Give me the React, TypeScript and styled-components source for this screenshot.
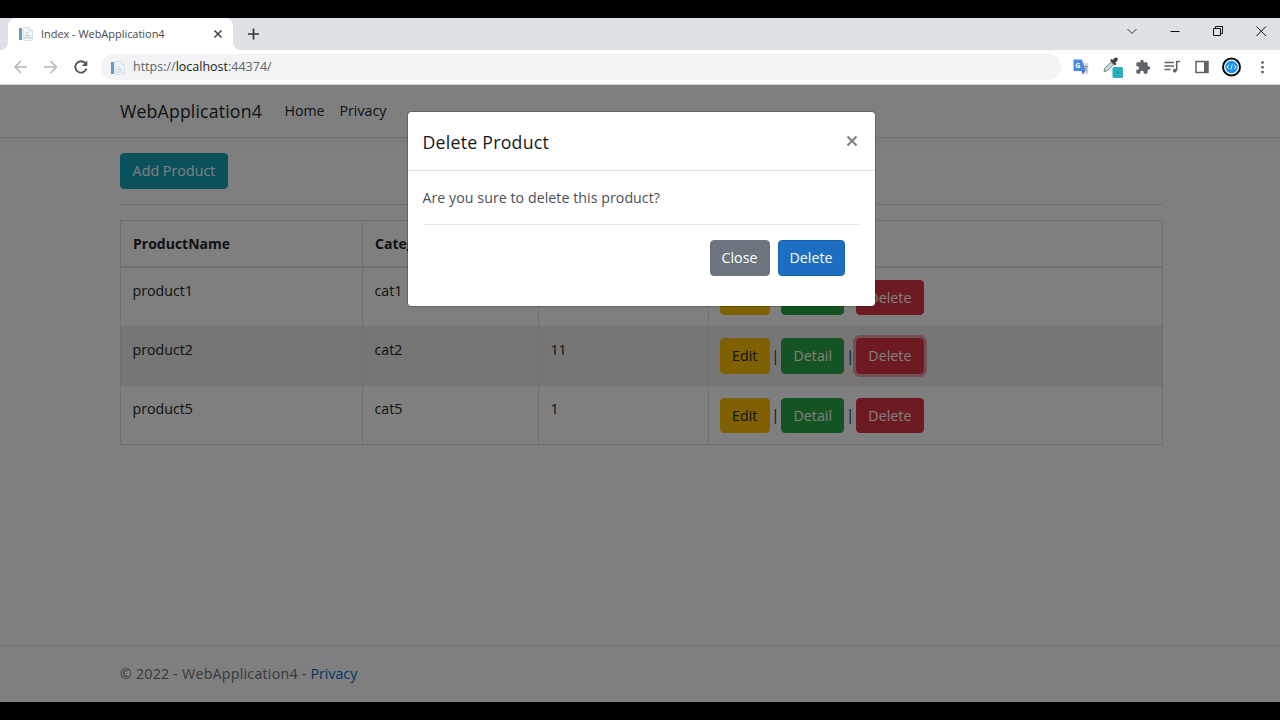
import React from 'react';
import styled, { createGlobalStyle } from 'styled-components';

const Global = createGlobalStyle`
  *, *::before, *::after { box-sizing: border-box; }
  html, body { margin: 0; padding: 0; background: #000; overflow: hidden; }
  body { font-family: "Open Sans", "Noto Sans", sans-serif; font-size: 14.2px; line-height: 22.5px; color: #212529; }
  button { font-family: inherit; }
`;

const Screen = styled.div`
  width: 1280px;
  height: 720px;
  padding: 18px 0;
  background: #000;
  display: flex;
  flex-direction: column;
`;

const TabStrip = styled.div`
  height: 32px;
  flex: none;
  display: flex;
  background: #dee1e6;
  padding-left: 8px;
`;

const Tab = styled.div`
  position: relative;
  width: 225px;
  height: 32px;
  background: #fff;
  border-radius: 8px 8px 0 0;
  display: flex;
  align-items: center;
  padding: 0 10px 0 10px;
  font-size: 11px;
  color: #45494d;

  &::before, &::after {
    content: "";
    position: absolute;
    bottom: 0;
    width: 7px;
    height: 7px;
  }
  &::before { left: -7px; background: radial-gradient(circle at 0 0, transparent 6.5px, #fff 7px); }
  &::after { right: -7px; background: radial-gradient(circle at 100% 0, transparent 6.5px, #fff 7px); }
`;

const TabTitle = styled.span`
  flex: 1;
  margin-left: 7px;
  letter-spacing: -0.04px;
  white-space: nowrap;
`;

const NewTab = styled.div`
  width: 14px;
  margin-left: 13px;
  display: flex;
  align-items: center;
`;

const WindowControls = styled.div`
  margin-left: auto;
  display: flex;
  align-items: center;
  gap: 31px;
  padding: 0 13px 6px 0;
`;

const Toolbar = styled.div`
  height: 35px;
  flex: none;
  display: flex;
  align-items: center;
  background: #fff;
  border-bottom: 1px solid #d9dbde;
  padding: 0 10px 0 13px;
`;

const NavIcons = styled.div`
  display: flex;
  gap: 14px;
  margin-right: 12px;
`;

const AddressBar = styled.div`
  width: 960px;
  height: 26px;
  border-radius: 13px;
  background: #f1f3f4;
  display: flex;
  align-items: center;
  padding: 1px 0 0 9px;
  font-size: 12.5px;
  color: #5f6368;
  gap: 7px;
`;

const Host = styled.span`
  color: #202124;
`;

const Extensions = styled.div`
  display: flex;
  align-items: center;
  flex: 1;
  justify-content: space-between;
  margin-left: 12px;
`;

const Page = styled.div`
  position: relative;
  flex: 1;
  background: #fff;
  display: flex;
  flex-direction: column;
`;

const Navbar = styled.nav`
  height: 53px;
  flex: none;
  display: flex;
  align-items: center;
  padding: 1px 120px 0;
  border-bottom: 1px solid #dee2e6;
  box-shadow: 0 4px 11px rgba(0, 0, 0, 0.05);
`;

const Brand = styled.span`
  font-size: 17.7px;
  letter-spacing: 0.16px;
  margin-right: 22.5px;
`;

const NavLink = styled.span`
  margin-right: 15px;
`;

const Content = styled.main`
  padding: 15px 117px 0 120px;
  flex: 1;
`;

type Tone = 'info' | 'warning' | 'success' | 'danger' | 'secondary' | 'primary';

const tones: Record<Tone, { fill: string; edge: string; text: string }> = {
  info: { fill: '#17a2b8', edge: '#17a2b8', text: '#fff' },
  warning: { fill: '#ffc107', edge: '#ffc107', text: '#212529' },
  success: { fill: '#28a745', edge: '#28a745', text: '#fff' },
  danger: { fill: '#dc3545', edge: '#dc3545', text: '#fff' },
  secondary: { fill: '#6c757d', edge: '#6c757d', text: '#fff' },
  primary: { fill: '#1b6ec2', edge: '#1861ac', text: '#fff' },
};

const Button = styled.button<{ $tone: Tone; $width: number; $focused?: boolean }>`
  width: ${p => p.$width}px;
  height: 35.6px;
  padding: 1px 0 0;
  border-radius: 4px;
  border: 1px solid ${p => tones[p.$tone].edge};
  background: ${p => tones[p.$tone].fill};
  color: ${p => tones[p.$tone].text};
  font-size: 14.2px;
  line-height: 22.5px;
  letter-spacing: 0.06px;
  box-shadow: ${p => (p.$focused ? '0 0 0 3px rgba(225, 83, 97, 0.5)' : 'none')};
`;

const Rule = styled.hr`
  margin: 15px 0;
  border: 0;
  border-top: 1px solid rgba(0, 0, 0, 0.1);
`;

const Table = styled.table`
  width: 1043px;
  table-layout: fixed;
  border-collapse: collapse;
  border: 1px solid #dee2e6;
`;

const HeadCell = styled.th`
  height: 47px;
  padding: 2px 12px 0;
  text-align: left;
  font-weight: 700;
  font-size: 14px;
  border: 1px solid #dee2e6;
  border-bottom-width: 2px;
`;

const Row = styled.tr<{ $hovered?: boolean }>`
  height: 59.3px;
  background: ${p => (p.$hovered ? '#ececec' : 'transparent')};
`;

const Cell = styled.td`
  padding: 12px 11.5px 10px;
  vertical-align: top;
  border: 1px solid #dee2e6;
`;

const Actions = styled.div`
  display: flex;
  align-items: center;
  margin: -0.6px 0 0 -0.8px;
`;

const Divider = styled.span`
  width: 11.6px;
  text-align: center;
`;

const Footer = styled.footer`
  height: 57px;
  flex: none;
  border-top: 1px solid #dee2e6;
  padding: 1px 120px 0;
  display: flex;
  align-items: center;
  color: #6c757d;
  white-space: pre;
  letter-spacing: 0.25px;
`;

const FooterLink = styled.a`
  color: #0366d6;
  letter-spacing: 0;
`;

const Backdrop = styled.div`
  position: absolute;
  inset: 0;
  background: rgba(0, 0, 0, 0.5);
  display: flex;
  justify-content: center;
  align-items: flex-start;
  padding-top: 26px;
`;

const Dialog = styled.section`
  width: 469px;
  height: 195.5px;
  margin-left: 2px;
  background: #fff;
  border: 1px solid rgba(0, 0, 0, 0.2);
  background-clip: padding-box;
  border-radius: 4.5px;
`;

const DialogHeader = styled.header`
  height: 59px;
  border-bottom: 1px solid #dee2e6;
  padding: 0 15px;
  display: flex;
  align-items: center;
  justify-content: space-between;
`;

const DialogTitle = styled.h5`
  margin: 2px 0 0;
  font-size: 17.7px;
  font-weight: 500;
  letter-spacing: 0.26px;
  color: #15181b;
`;

const DialogBody = styled.div`
  padding: 16px 15px 0;
  color: #4c5054;
  letter-spacing: 0.05px;
`;

const DialogRule = styled(Rule)`
  margin: 14.5px 0 15px;
`;

const DialogActions = styled.div`
  display: flex;
  justify-content: flex-end;
  gap: 8px;
  padding-right: 15px;
`;

const Favicon = () => (
  <svg width="16" height="16" viewBox="0 0 16 16">
    <rect x="1" y="2" width="3" height="12" fill="#5a9dc4" />
    <path d="M5.5 1.5h6l3 3v10h-9z" fill="#f5f8fa" stroke="#d3dade" strokeWidth=".8" />
    <path d="M11.2 1.8v3h3" fill="none" stroke="#c3ccd2" strokeWidth=".8" />
    <path d="M7.500 7h3M7 9.500h5M6 12h8" stroke="#b3c8d6" />
  </svg>
);

const products = [
  { name: 'product1', category: 'cat1', price: '10' },
  { name: 'product2', category: 'cat2', price: '11' },
  { name: 'product5', category: 'cat5', price: '1' },
];

export default function App() {
  return (
    <Screen>
      <Global />
      <TabStrip>
        <Tab>
          <Favicon />
          <TabTitle>Index - WebApplication4</TabTitle>
          <svg width="10" height="10" viewBox="0 0 10 10" stroke="#3c4043" strokeWidth="1.5">
            <path d="M1.5 1.5l7 7M8.500 1.500l-7 7" />
          </svg>
        </Tab>
        <NewTab>
          <svg width="14" height="14" viewBox="0 0 14 14" stroke="#33373a" strokeWidth="1.7">
            <path d="M7.500 1.500v11M2 7h11" />
          </svg>
        </NewTab>
        <WindowControls>
          <svg width="12" height="12" viewBox="0 0 12 12" fill="none" stroke="#33373a" strokeWidth="1"><path d="M1.500 4l4.500 4.500L10.500 4" /></svg>
          <svg width="12" height="12" viewBox="0 0 12 12" fill="none" stroke="#111"><path d="M1.500 6.500h9" /></svg>
          <svg width="12" height="12" viewBox="0 0 12 12" fill="none" stroke="#111"><path d="M1.500 3.500h7v7h-7zM3.500 3.500v-2h7v7h-2" /></svg>
          <svg width="12" height="12" viewBox="0 0 12 12" fill="none" stroke="#111"><path d="M1.500 1.500l9.500 9.500M11 1.500L1.500 11" /></svg>
        </WindowControls>
      </TabStrip>
      <Toolbar>
        <NavIcons>
          <svg width="16" height="16" viewBox="0 0 16 16" fill="none" stroke="#b4b6b9" strokeWidth="1.500"><path d="M14 8H2M8 2L2 8l6 6" /></svg>
          <svg width="16" height="16" viewBox="0 0 16 16" fill="none" stroke="#b4b6b9" strokeWidth="1.500"><path d="M1 8H13.500M7.500 2l6 6-6 6" /></svg>
          <svg width="16" height="16" viewBox="0 0 16 16" fill="none" stroke="#505357" strokeWidth="1.800"><path d="M13.500 9.500A5.700 5.700 0 1 1 12.300 4.200" /><path d="M14.300 1.500v5.400H8.900z" fill="#505357" stroke="none" /></svg>
        </NavIcons>
        <AddressBar>
          <Favicon />
          <span>https://<Host>localhost</Host>:44374/</span>
        </AddressBar>
        <Extensions>
          <svg width="16" height="16" viewBox="0 0 16 16">
            <path d="M6 4h9.300v11.300H9z" fill="#d9dcdf" />
            <path d="M.5.500H9l3.300 11.500H.5z" fill="#4a86e8" />
            <path d="M9 12h3.300L9.500 15.300z" fill="#3367d6" />
            <text x="2.300" y="8.700" fontSize="7" fontWeight="700" fill="#fff" fontFamily="Open Sans">G</text>
            <path d="M10.500 7.500h4.300M12.500 6.500v1M14 7.500c-.3 2-1.500 3.200-2.500 4M11.500 8.500c.6 1.700 1.800 2.700 3 3.500" fill="none" stroke="#71797f" strokeWidth=".8" />
          </svg>
          <svg width="21" height="22" viewBox="0 0 21 22">
            <path d="M2 15.500l1-3.300 6-6 2.400 2.400-6 6z" fill="#cfe0df" stroke="#5d7c7b" />
            <path d="M8 4.500l5 5 1.500-1.500-1.200-1.300 2-2c1.700-1.800-.9-4.300-2.600-2.600l-2 2L9.400 2.900z" fill="#404040" />
            <rect x="10.500" y="11" width="10.500" height="11" rx="1.500" fill="#29b0bd" />
            <circle cx="15.700" cy="16.500" r=".7" fill="#14717a" />
          </svg>
          <svg width="16" height="16" viewBox="0 0 24 24" fill="#5f6368"><path d="M20.500 11H19V7c0-1.100-.9-2-2-2h-4V3.500a2.500 2.500 0 0 0-5 0V5H4c-1.100 0-2 .9-2 2v3.800h1.500a2.700 2.700 0 0 1 0 5.400H2V20c0 1.100.9 2 2 2h3.800v-1.500a2.700 2.700 0 0 1 5.400 0V22H17c1.100 0 2-.9 2-2v-4h1.500a2.500 2.500 0 0 0 0-5z" /></svg>
          <svg width="18" height="16" viewBox="0 0 18 16" fill="none" stroke="#5f6368" strokeWidth="1.600"><path d="M.5 3.500h9.500M.5 7h9.500M.5 10.500h6M12.700 11.500v-9H16" /><circle cx="10.800" cy="11.700" r="1.900" fill="#5f6368" stroke="none" /></svg>
          <svg width="14" height="14" viewBox="0 0 14 14"><rect x="1" y="1.500" width="12" height="11" fill="#fff" stroke="#5f6368" strokeWidth="1.500" /><path d="M9 1.500h4v11H9z" fill="#5f6368" /></svg>
          <svg width="20" height="20" viewBox="0 0 20 20"><circle cx="10.500" cy="10" r="8.500" fill="#fff" stroke="#0b0b0b" strokeWidth="2" /><circle cx="10.500" cy="10" r="6.200" fill="#1c91ed" /><path d="M8 7.900L6 10l2 2.100M13 7.900l2 2.100-2 2.100M11.200 7.400l-1.400 5.200" fill="none" stroke="#fff" strokeWidth=".9" /></svg>
          <svg width="16" height="16" viewBox="0 0 16 16" fill="#505357"><circle cx="8.500" cy="3.500" r="1.300" /><circle cx="8.500" cy="8.300" r="1.300" /><circle cx="8.500" cy="13.100" r="1.300" /></svg>
        </Extensions>
      </Toolbar>
      <Page>
        <Navbar>
          <Brand>WebApplication4</Brand>
          <NavLink>Home</NavLink>
          <NavLink>Privacy</NavLink>
        </Navbar>
        <Content>
          <Button $tone="info" $width={108}>Add Product</Button>
          <Rule />
          <Table>
            <colgroup>
              <col width="242" />
              <col width="176" />
              <col width="170" />
              <col />
            </colgroup>
            <thead>
              <tr>
                <HeadCell>ProductName</HeadCell>
                <HeadCell>Category</HeadCell>
                <HeadCell>Price</HeadCell>
                <HeadCell />
              </tr>
            </thead>
            <tbody>
              {products.map(item => (
                <Row key={item.name} $hovered={item.name === 'product2'}>
                  <Cell>{item.name}</Cell>
                  <Cell>{item.category}</Cell>
                  <Cell>{item.price}</Cell>
                  <Cell>
                    <Actions>
                      <Button $tone="warning" $width={50}>Edit</Button>
                      <Divider>|</Divider>
                      <Button $tone="success" $width={63}>Detail</Button>
                      <Divider>|</Divider>
                      <Button $tone="danger" $width={68} $focused={item.name === 'product2'}>Delete</Button>
                    </Actions>
                  </Cell>
                </Row>
              ))}
            </tbody>
          </Table>
        </Content>
        <Footer>
          {'© 2022 - WebApplication4 - '}
          <FooterLink>Privacy</FooterLink>
        </Footer>
        <Backdrop>
          <Dialog>
            <DialogHeader>
              <DialogTitle>Delete Product</DialogTitle>
              <svg width="16" height="16" viewBox="0 0 16 16" stroke="#7f7f7f" strokeWidth="2"><path d="M3.500 3.500l9 9M12.500 3.500l-9 9" /></svg>
            </DialogHeader>
            <DialogBody>
              Are you sure to delete this product?
              <DialogRule />
              <DialogActions>
                <Button $tone="secondary" $width={60}>Close</Button>
                <Button $tone="primary" $width={67}>Delete</Button>
              </DialogActions>
            </DialogBody>
          </Dialog>
        </Backdrop>
      </Page>
    </Screen>
  );
}
